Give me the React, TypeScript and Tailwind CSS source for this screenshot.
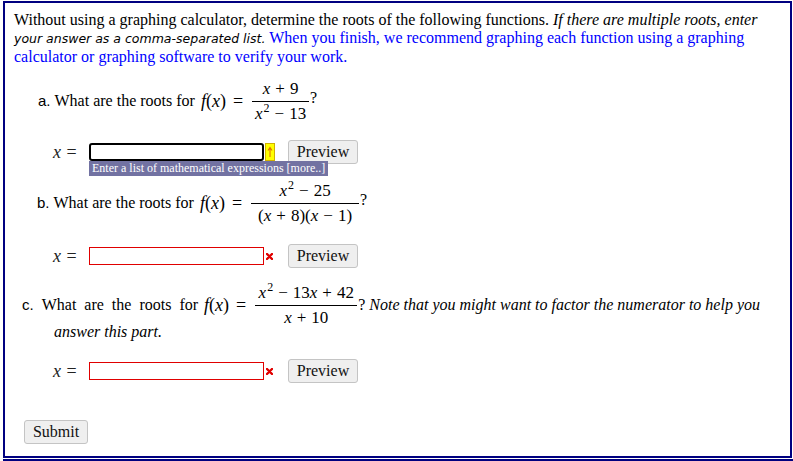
import React from 'react';

const serif = "font-['Liberation_Serif','Times_New_Roman',serif]";

function MathX() {
  return <span className={`italic ${serif}`}>x</span>;
}

function Op({ children }: { children: React.ReactNode }) {
  return <span className="mx-[5px]">{children}</span>;
}

function Sq() {
  return <sup className="text-[12px] -top-[7px] ml-px">2</sup>;
}

function Frac({ num, den, width }: { num: React.ReactNode; den: React.ReactNode; width: string }) {
  return (
    <span className={`inline-flex flex-col items-center ${width} ${serif}`}>
      <span className="leading-[18px] text-[17px] whitespace-nowrap">{num}</span>
      <span className="w-full h-px bg-black my-[3px]" />
      <span className="leading-[18px] text-[17px] whitespace-nowrap">{den}</span>
    </span>
  );
}

function Fx() {
  return (
    <span className={`ml-[6px] text-[18px] ${serif}`}>
      <i>f</i>(<MathX />)<span className="ml-[7px] mr-[9px]">=</span>
    </span>
  );
}

function AnswerRow({ focused }: { focused?: boolean }) {
  return (
    <div className={`relative flex items-center h-[24px] ${serif}`}>
      <span className="ml-[39px] w-[36px] text-[18px] text-[#222]">
        <MathX /> <span className="ml-[1px]">=</span>
      </span>
      {focused ? (
        <div className="w-[175px] h-[18px] border-2 border-black rounded-[3px] bg-white" />
      ) : (
        <div className="w-[175px] h-[18px] border border-[#e00000] bg-white" />
      )}
      {focused ? (
        <div className="ml-px w-[10px] h-[18px] bg-[#ffff00] border border-[#d0b000] flex items-center justify-center">
          <svg width="6" height="12" viewBox="0 0 6 12">
            <path d="M3 11 L3 2 M1 4.5 L3 1.5 L5 4.5" stroke="#e07000" strokeWidth="1.1" fill="none" />
          </svg>
        </div>
      ) : (
        <div className="w-[11px] flex items-center justify-center">
          <svg width="7" height="7" viewBox="0 0 7 7">
            <path d="M1 1 L6 6 M6 1 L1 6" stroke="#e00000" strokeWidth="2.4" strokeLinecap="round" />
          </svg>
        </div>
      )}
      <button className={`ml-[13px] w-[70px] h-[24px] bg-[#efefef] border border-[#c4c4c4] rounded-[3px] text-[16px] leading-none text-[#111] ${serif}`}>
        Preview
      </button>
      {focused && (
        <div className={`absolute left-[75px] top-[21px] h-[15px] px-[3px] bg-[#7272a2] text-white text-[12px] leading-[15px] whitespace-nowrap ${serif}`}>
          Enter a list of mathematical expressions [more..]
        </div>
      )}
    </div>
  );
}

export default function App() {
  return (
    <div className={`w-[793px] h-[461px] bg-white overflow-hidden ${serif}`}>
      <div className="ml-[3px] mt-px w-[789px] h-[457px] border-2 border-[#000080] pl-[9px] pt-[8px]">
        {/* intro */}
        <div className="text-[16px] leading-[18px] text-black">
          Without using a graphing calculator, determine the roots of the following functions.{' '}
          <i>If there are multiple roots, enter</i>
          <br />
          <i className="font-['DejaVu_Sans',sans-serif] text-[12.5px]">your answer as a comma-separated list.</i>
          <span className="text-[#0000ff]">
            {' '}When you finish, we recommend graphing each function using a graphing
            <br />
            calculator or graphing software to verify your work.
          </span>
        </div>

        {/* part a */}
        <div className="mt-[15px] h-[40px] flex items-center text-[16px]">
          <span className="ml-[24px] font-['Liberation_Sans',Arial,sans-serif] text-[15px]">a.</span>
          <span className="ml-[4px]">What are the roots for</span>
          <Fx />
          <Frac
            width="w-[57px]"
            num={<><MathX /><Op>+</Op>9</>}
            den={<><MathX /><Sq /><Op>−</Op>13</>}
          />
          <span className="ml-px -mt-[6px]">?</span>
        </div>

        <div className="mt-[19px]">
          <AnswerRow focused />
        </div>

        {/* part b */}
        <div className="mt-[17px] h-[44px] flex items-center text-[16px]">
          <span className="ml-[23px] font-['Liberation_Sans',Arial,sans-serif] text-[15px]">b.</span>
          <span className="ml-[4px]">What are the roots for</span>
          <Fx />
          <Frac
            width="w-[108px]"
            num={<><MathX /><Sq /><Op>−</Op>25</>}
            den={<>(<MathX /><Op>+</Op>8)(<MathX /><Op>−</Op>1)</>}
          />
          <span className="ml-px -mt-[6px]">?</span>
        </div>

        <div className="mt-[19px]">
          <AnswerRow />
        </div>

        {/* part c */}
        <div className="mt-[19px] h-[36px] flex items-center text-[16px] whitespace-nowrap">
          <span className="ml-[8px] font-['Liberation_Sans',Arial,sans-serif] text-[15px]">c.</span>
          <span className="ml-[8px] [word-spacing:4px]">What are the roots for</span>
          <Fx />
          <Frac
            width="w-[102px]"
            num={<><MathX /><Sq /><Op>−</Op>13<MathX /><Op>+</Op>42</>}
            den={<><MathX /><Op>+</Op>10</>}
          />
          <span className="ml-px">?</span>
          <i className="ml-[4px] text-[16px]">Note that you might want to factor the numerator to help you</i>
        </div>
        <div className="ml-[40px] h-[18px] leading-[18px] text-[16px] italic">answer this part.</div>

        <div className="mt-[18px]">
          <AnswerRow />
        </div>

        <button className={`mt-[37px] ml-[10px] w-[64px] h-[24px] bg-[#efefef] border border-[#c4c4c4] rounded-[3px] text-[16px] leading-none text-[#111] ${serif}`}>
          Submit
        </button>
      </div>
      <div className="ml-[3px] mt-px h-[2px] bg-[#000080]" />
    </div>
  );
}
